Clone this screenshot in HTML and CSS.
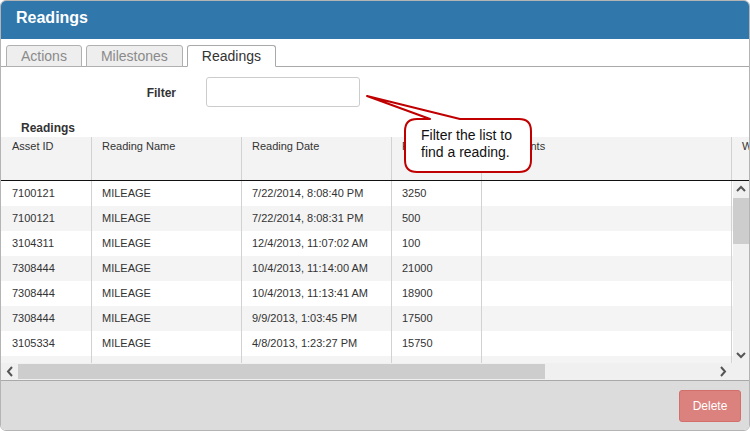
FILE: index.html
```html
<!DOCTYPE html>
<html>
<head>
    <title>Readings</title>
    <link rel="stylesheet" href="styles.css">
</head>
<body>
    <div class="dialog">
        <div class="dialog-header">
            <h1>Readings</h1>
        </div>

        <div class="tabs">
            <span class="tab">Actions</span>
            <span class="tab">Milestones</span>
            <span class="tab active">Readings</span>
        </div>

        <div class="filter-row">
            <label class="filter-label">Filter</label>
            <input type="text" class="filter-input">
        </div>

        <div class="section-title">Readings</div>

        <div class="grid">
            <div class="grid-head">
                <div class="cell c1">Asset ID</div>
                <div class="cell c2">Reading Name</div>
                <div class="cell c3">Reading Date</div>
                <div class="cell c4">Reading</div>
                <div class="cell c5">Comments</div>
                <div class="cell c6">W</div>
            </div>

            <div class="grid-body">
                <div class="rows">
                    <div class="row">
                        <div class="cell c1">7100121</div>
                        <div class="cell c2">MILEAGE</div>
                        <div class="cell c3">7/22/2014, 8:08:40 PM</div>
                        <div class="cell c4">3250</div>
                        <div class="cell c5"></div>
                    </div>
                    <div class="row">
                        <div class="cell c1">7100121</div>
                        <div class="cell c2">MILEAGE</div>
                        <div class="cell c3">7/22/2014, 8:08:31 PM</div>
                        <div class="cell c4">500</div>
                        <div class="cell c5"></div>
                    </div>
                    <div class="row">
                        <div class="cell c1">3104311</div>
                        <div class="cell c2">MILEAGE</div>
                        <div class="cell c3">12/4/2013, 11:07:02 AM</div>
                        <div class="cell c4">100</div>
                        <div class="cell c5"></div>
                    </div>
                    <div class="row">
                        <div class="cell c1">7308444</div>
                        <div class="cell c2">MILEAGE</div>
                        <div class="cell c3">10/4/2013, 11:14:00 AM</div>
                        <div class="cell c4">21000</div>
                        <div class="cell c5"></div>
                    </div>
                    <div class="row">
                        <div class="cell c1">7308444</div>
                        <div class="cell c2">MILEAGE</div>
                        <div class="cell c3">10/4/2013, 11:13:41 AM</div>
                        <div class="cell c4">18900</div>
                        <div class="cell c5"></div>
                    </div>
                    <div class="row">
                        <div class="cell c1">7308444</div>
                        <div class="cell c2">MILEAGE</div>
                        <div class="cell c3">9/9/2013, 1:03:45 PM</div>
                        <div class="cell c4">17500</div>
                        <div class="cell c5"></div>
                    </div>
                    <div class="row">
                        <div class="cell c1">3105334</div>
                        <div class="cell c2">MILEAGE</div>
                        <div class="cell c3">4/8/2013, 1:23:27 PM</div>
                        <div class="cell c4">15750</div>
                        <div class="cell c5"></div>
                    </div>
                    <div class="row">
                        <div class="cell c1"></div>
                        <div class="cell c2"></div>
                        <div class="cell c3"></div>
                        <div class="cell c4"></div>
                        <div class="cell c5"></div>
                    </div>
                </div>

                <div class="vscroll">
                    <svg class="arrow" width="16" height="16" viewBox="0 0 16 16"><polyline points="4,10 8,6 12,10" fill="none" stroke="#555" stroke-width="2"/></svg>
                    <div class="vthumb"></div>
                    <div class="vspace"></div>
                    <svg class="arrow" width="16" height="16" viewBox="0 0 16 16"><polyline points="4,6 8,10 12,6" fill="none" stroke="#555" stroke-width="2"/></svg>
                </div>
            </div>

            <div class="hscroll">
                <svg class="arrow" width="16" height="17" viewBox="0 0 16 17"><polyline points="10,4 6,8.5 10,13" fill="none" stroke="#555" stroke-width="2"/></svg>
                <div class="hthumb"></div>
                <div class="hspace"></div>
                <svg class="arrow" width="16" height="17" viewBox="0 0 16 17"><polyline points="6,4 10,8.5 6,13" fill="none" stroke="#555" stroke-width="2"/></svg>
            </div>
        </div>

        <div class="footer">
            <button class="delete-button">Delete</button>
        </div>

        <!-- help callout pointing at the filter box -->
        <svg class="callout-shape" width="750" height="431" viewBox="0 0 750 431">
            <path d="M417,119 L430,119 L367,96 L460,119 L519,119 Q531,119 531,131 L531,160 Q531,172 519,172 L417,172 Q405,172 405,160 L405,131 Q405,119 417,119 Z" fill="#ffffff" stroke="#c00000" stroke-width="2" stroke-linejoin="round"/>
        </svg>
        <div class="callout-text">Filter the list to<br>find a reading.</div>
    </div>
</body>
</html>
```

FILE: styles.css
```css
* {
    margin: 0;
    padding: 0;
    box-sizing: border-box;
    font-family: "Liberation Sans", Arial, sans-serif;
}

body {
    background-color: #ffffff;
}

.dialog {
    position: relative;
    width: 750px;
    height: 431px;
    border: 1px solid #b4b4b4;
    border-radius: 6px;
    overflow: hidden;
    display: flex;
    flex-direction: column;
    background-color: #ffffff;
}

.dialog-header {
    height: 38px;
    background-color: #3077ab;
    padding: 8px 15px;
}

.dialog-header h1 {
    font-size: 16px;
    line-height: 18px;
    font-weight: bold;
    color: #ffffff;
}

.tabs {
    height: 28px;
    border-bottom: 1px solid #a9a9a9;
    display: flex;
    align-items: flex-end;
    gap: 4px;
    padding-left: 5px;
}

.tab {
    height: 22px;
    margin-bottom: -1px;
    padding: 0 14px;
    border: 1px solid #b0b0b0;
    border-radius: 3px 3px 0 0;
    background-color: #eeeeee;
    color: #8a8a8a;
    font-size: 14px;
    line-height: 20px;
}

.tab.active {
    background-color: #ffffff;
    color: #333333;
    border-color: #a9a9a9;
    border-bottom-color: #ffffff;
}

.filter-row {
    display: flex;
    align-items: center;
    padding-top: 10px;
}

.filter-label {
    width: 175px;
    padding-top: 2px;
    text-align: right;
    margin-right: 30px;
    font-size: 12px;
    font-weight: bold;
    color: #333333;
}

.filter-input {
    width: 154px;
    height: 30px;
    border: 1px solid #cccccc;
    border-radius: 3px;
}

.section-title {
    margin: 14px 0 2px 20px;
    font-size: 12px;
    line-height: 14px;
    font-weight: bold;
    color: #333333;
}

.grid {
    display: flex;
    flex-direction: column;
}

.grid-head {
    display: flex;
    height: 44px;
    background-color: #f3f3f3;
    border-bottom: 1px solid #111111;
    overflow: hidden;
}

.cell {
    flex-shrink: 0;
    border-right: 1px solid #d2d2d2;
    padding-left: 10px;
    font-size: 11px;
    color: #333333;
    white-space: nowrap;
    overflow: hidden;
}

.grid-head .cell {
    padding-top: 3px;
    line-height: 13px;
}

.c1 { width: 91px; padding-left: 11px; }
.c2 { width: 150px; }
.c3 { width: 150px; }
.c4 { width: 90px; }
.c5 { width: 250px; }
.c6 { width: 40px; border-right: none; }

.grid-body {
    display: flex;
    height: 182px;
}

.rows {
    width: 732px;
    overflow: hidden;
}

.row {
    display: flex;
    height: 25px;
}

.row:nth-child(even) {
    background-color: #f4f4f4;
}

.row .cell {
    line-height: 25px;
}

.vscroll {
    width: 16px;
    background-color: #f0f0f0;
    display: flex;
    flex-direction: column;
}

.arrow {
    flex-shrink: 0;
    display: block;
}

.vthumb {
    height: 46px;
    margin-top: 1px;
    background-color: #cdcdcd;
}

.vspace {
    flex: 1;
}

.hscroll {
    height: 17px;
    background-color: #f0f0f0;
    display: flex;
    align-items: center;
    padding-left: 1px;
    padding-right: 18px;
}

.hthumb {
    width: 527px;
    height: 15px;
    background-color: #cdcdcd;
}

.hspace {
    flex: 1;
}

.footer {
    flex: 1;
    background-color: #dcdcdc;
    border-top: 1px solid #a9a9a9;
    display: flex;
    justify-content: flex-end;
    align-items: flex-start;
    padding: 9px 8px 0 0;
}

.delete-button {
    width: 62px;
    height: 32px;
    border: 1px solid #d26f6b;
    border-radius: 3px;
    background-color: #db827e;
    color: #ffffff;
    font-size: 12px;
}

.callout-shape {
    position: absolute;
    left: -1px;
    top: -1px;
}

.callout-text {
    position: absolute;
    left: 420px;
    top: 126px;
    font-size: 14px;
    line-height: 17px;
    color: #111111;
}
```
